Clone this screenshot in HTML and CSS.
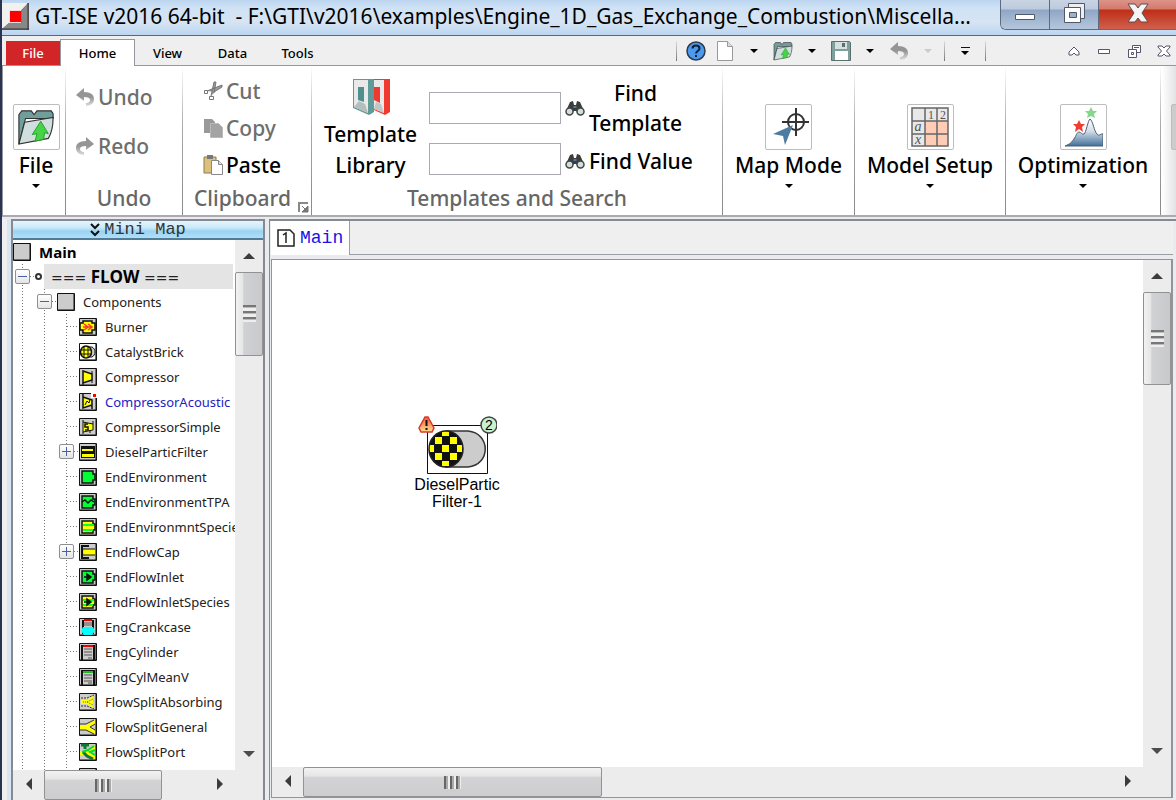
FILE: index.html
```html
<!DOCTYPE html>
<html lang="en">
<head>
    <meta charset="UTF-8">
    <meta name="viewport" content="width=device-width, initial-scale=1.0">
    <title>GT-ISE v2016 64-bit</title>
    <link rel="stylesheet" href="styles.css">
</head>
<body>
    <!-- shared symbols -->
    <svg class="symbols" aria-hidden="true">
        <defs>
            <linearGradient id="gFade" x1="0" y1="0" x2="0" y2="1">
                <stop offset="0.5" stop-color="#959595"/>
                <stop offset="1" stop-color="#dedede"/>
            </linearGradient>
            <linearGradient id="gPeak" x1="0" y1="0" x2="0" y2="1">
                <stop offset="0" stop-color="#ffffff"/>
                <stop offset="0.45" stop-color="#d3dde6"/>
                <stop offset="1" stop-color="#41719c"/>
            </linearGradient>
            <linearGradient id="gWarn" x1="0" y1="0" x2="0" y2="1">
                <stop offset="0" stop-color="#ef5a3c"/>
                <stop offset="1" stop-color="#ffe08a"/>
            </linearGradient>
        </defs>
        <symbol id="undo" viewBox="0 0 20 20">
            <path d="M1 8 9 1v4c7 0 10 3 10 7 0 4-3 7-8 7v-3c3 0 4-2 4-3 0-2-2-3-6-3v4z" fill="url(#gFade)"/>
        </symbol>
        <symbol id="redo" viewBox="0 0 20 20">
            <path d="M19 8 11 1v4C4 5 1 8 1 12c0 4 3 7 8 7v-3c-3 0-4-2-4-3 0-2 2-3 6-3v4z" fill="url(#gFade)"/>
        </symbol>
        <symbol id="folder" viewBox="0 0 40 40">
            <path d="M2 38V7l3-4h10l3 4 3-4h15l2 3v5H9z" fill="#6f9e9b" stroke="#333" stroke-width="1.2"/>
            <path d="M2 38 8 15l30-5c0 10-2 17-5 22z" fill="#cfdfdd" stroke="#333" stroke-width="1.2"/>
            <path d="M25 14l8 13-4-1-1 7-9 2 2-8-5 1z" fill="#45d445" stroke="#2a9a2a"/>
        </symbol>
        <symbol id="binoculars" viewBox="0 0 20 16">
            <path d="M1 11 5 2l3-1 1 4h2l1-4 3 1 4 9-4 3-4-3H9l-4 3z" fill="#3c3c3c"/>
            <circle cx="4.500" cy="11.500" r="3.500" fill="#cfe0dc" stroke="#444" stroke-width="1.500"/>
            <circle cx="15.500" cy="11.500" r="3.500" fill="#cfe0dc" stroke="#444" stroke-width="1.500"/>
            <path d="M8.500 6h3v2h-3z" fill="#4a7aa0"/>
        </symbol>
        <symbol id="tile" viewBox="0 0 18 18">
            <path d="M.5.5h17v17H.5z" fill="#ccc" stroke="#111"/>
            <path d="M1 17h16V1" fill="none" stroke="#111"/>
        </symbol>
        <symbol id="env" viewBox="0 0 18 18">
            <path d="M3 3h11v3h2v6h-2v3H3z" stroke="#111" stroke-width="1.500"/>
        </symbol>
    </svg>

    <div class="window">
        <header class="titlebar">
            <svg class="app-icon" viewBox="0 0 27 27" aria-hidden="true">
                <path d="M0 0h27v27H0z" fill="#777"/>
                <path d="M0 0h26L8 19 0 26z" fill="#f1f1f1"/>
                <path d="M26 0v26H0l7-6h13V8z" fill="#888"/>
                <path d="M7 7h12v13H7z" fill="#f5d8d8"/>
                <path d="M8 8h11v11H8z" fill="#f00"/>
                <path d="M0 26h27M26 0v27" stroke="#333" fill="none"/>
            </svg>
            <h1>GT-ISE v2016 64-bit &nbsp;- F:\GTI\v2016\examples\Engine_1D_Gas_Exchange_Combustion\Miscella...</h1>
            <div class="window-buttons">
                <button aria-label="Minimize">
                    <svg width="22" height="22" viewBox="0 0 22 22"><path d="M1.500 12.500h19v5h-19z" fill="#fff" stroke="#50596b"/></svg>
                </button>
                <button aria-label="Restore">
                    <svg width="24" height="24" viewBox="0 0 24 24"><path d="M6.500 2.500h16v15h-16z" fill="#eee" stroke="#50596b"/><path d="M2.500 6.500h16v15h-16z" fill="#fff" stroke="#50596b"/><path d="M7.500 11.500h7v5h-7z" fill="#9db1c9" stroke="#50596b"/></svg>
                </button>
                <button class="close" aria-label="Close">
                    <svg width="22" height="20" viewBox="0 0 22 20"><path d="M1 1h7l3 4 3-4h7l-6 9 6 9h-7l-3-4-3 4H1l6-9z" fill="#f4f4f4" stroke="#5c4a50"/></svg>
                </button>
            </div>
        </header>

        <nav class="tabs">
            <button class="tab file-tab">File</button>
            <button class="tab active">Home</button>
            <button class="tab">View</button>
            <button class="tab">Data</button>
            <button class="tab">Tools</button>

            <div class="quick-access">
                <span class="sep first"></span>
                <button aria-label="Help">
                    <svg width="20" height="20" viewBox="0 0 20 20"><circle cx="10" cy="10" r="9" fill="#4a9bf0" stroke="#2b3b4c" stroke-width="1.500"/><path d="M6.500 7.500c0-4 7-4 7 0 0 2.500-3.500 2.500-3.500 5M10 14v2" fill="none" stroke="#12202e" stroke-width="2"/></svg>
                </button>
                <button aria-label="New">
                    <svg width="16" height="20" viewBox="0 0 16 20"><path d="M.5.5h10l5 5v14H.5z" fill="#fff" stroke="#999"/><path d="M10.500.5v5h5" fill="#ddd" stroke="#999"/></svg>
                </button>
                <button aria-label="New options"><i class="caret"></i></button>
                <button aria-label="Open"><svg width="20" height="20"><use href="#folder"/></svg></button>
                <button aria-label="Open options"><i class="caret"></i></button>
                <button aria-label="Save">
                    <svg width="20" height="20" viewBox="0 0 20 20"><path d="M.5.5h18l1 1v18H.5z" fill="#7f9f9d" stroke="#5c6f6e"/><path d="M4 1h12v7H4z" fill="#d5e0df"/><path d="M11 2h3v4h-3z" fill="#5c6f6e"/><path d="M4 10h13v9H4z" fill="#fff"/></svg>
                </button>
                <button aria-label="Save options"><i class="caret"></i></button>
                <button aria-label="Undo"><svg width="20" height="20"><use href="#undo"/></svg></button>
                <button aria-label="Undo options"><i class="caret faint"></i></button>
                <span class="sep"></span>
                <button class="customize" aria-label="Customize"><i class="bar"></i><i class="caret"></i></button>
                <span class="sep"></span>
            </div>
            <div class="mdi-buttons">
                <button aria-label="Collapse ribbon">
                    <svg width="14" height="12" viewBox="0 0 14 12"><path d="M2 7 7 2l5 5v3H9L7 8 5 10H2z" fill="#fff" stroke="#55556e"/></svg>
                </button>
                <button aria-label="Minimize document">
                    <svg width="14" height="10" viewBox="0 0 14 10"><path d="M1.500 3.500h11v4h-11z" fill="#fff" stroke="#55556e"/></svg>
                </button>
                <button aria-label="Restore document">
                    <svg width="15" height="15" viewBox="0 0 15 15"><path d="M5.500 1.500h8v7h-8z" fill="#fff" stroke="#55556e"/><path d="M7 3.500h5" stroke="#55556e"/><path d="M1.500 5.500h8v8h-8z" fill="#fff" stroke="#55556e"/><path d="M4.500 8.500h2v2h-2z" fill="none" stroke="#55556e"/></svg>
                </button>
                <button aria-label="Close document">
                    <svg width="14" height="14" viewBox="0 0 14 14"><path d="M1 2h4l2 2 2-2h4v1L9.500 7 13 11v1H9l-2-2-2 2H1v-1l3.500-4L1 3z" fill="#fff" stroke="#55556e"/></svg>
                </button>
            </div>
        </nav>

        <section class="ribbon">
            <div class="group file-group">
                <button class="big">
                    <span class="frame"><svg width="38" height="38"><use href="#folder"/></svg></span>
                    File
                    <i class="caret"></i>
                </button>
            </div>

            <div class="group undo-group">
                <div class="commands spread">
                    <button class="command" disabled><svg width="20" height="20"><use href="#undo"/></svg>Undo</button>
                    <button class="command" disabled><svg width="20" height="20"><use href="#redo"/></svg>Redo</button>
                </div>
                <div class="group-name">Undo</div>
            </div>

            <div class="group clipboard-group">
                <div class="commands">
                    <button class="command" disabled>
                        <svg width="20" height="20" viewBox="0 0 20 20"><path d="M4 10 19 4v2l-8 5M8 15l3-14h2l-2 11" fill="#999" stroke="#777"/><path d="M1.500 9.500h3v3h-3zM6.500 15.500h4v3h-4z" fill="#fff" stroke="#777"/></svg>Cut
                    </button>
                    <button class="command" disabled>
                        <svg width="20" height="20" viewBox="0 0 20 20"><path d="M1 1h8l3 3v11H1z" fill="#999"/><path d="M7.500 5.500h8l4 4v10h-12z" fill="#a3a3a3" stroke="#b9b9b9"/></svg>Copy
                    </button>
                    <button class="command">
                        <svg width="20" height="20" viewBox="0 0 20 20"><path d="M1 2h12v16H1z" fill="#dcc07e" stroke="#8c7a50"/><path d="M4 0h6v4H4z" fill="#777"/><path d="M8.500 5.500h7l4 4v10h-11z" fill="#fff" stroke="#888"/><path d="M15.500 5.500v4h4" fill="#ddd" stroke="#888"/></svg>Paste
                    </button>
                </div>
                <div class="group-name">Clipboard</div>
                <button class="launcher" aria-label="Clipboard options">
                    <svg width="11" height="11" viewBox="0 0 11 11"><path d="M1 10V1h9" fill="none" stroke="#888" stroke-width="2"/><path d="M4 4l3 3M10 4v6H4z" fill="#777" stroke="#777"/></svg>
                </button>
            </div>

            <div class="group template-group">
                <div class="search-row">
                    <button class="library">
                        <svg width="38" height="36" viewBox="0 0 38 36" aria-hidden="true">
                            <path d="M1 0h12l9 0v33l-5 3-16-7z" fill="#5e9b99"/>
                            <path d="M2 1h14v33L2 28z" fill="#e9e9e9"/><path d="M2 28l5-6 6 3 3 9z" fill="#b5bdbd"/><path d="M6 8h6v15l-6-2z" fill="#4f8f8d"/>
                            <path d="M22 0h16v33l-5 3-11-5z" fill="#f03a30"/>
                            <path d="M22 1h10v33l-10-4z" fill="#e9e9e9"/><path d="M22 30l2-7 5 2 3 9z" fill="#c4c4c4"/><path d="M22 8h6v16l-6-3z" fill="#f03a30"/>
                        </svg>
                        <span>Template<br>Library</span>
                    </button>
                    <div class="fields">
                        <input type="text" id="findTemplate">
                        <input type="text" id="findValue">
                    </div>
                    <div class="find-labels">
                        <label for="findTemplate"><svg width="20" height="16"><use href="#binoculars"/></svg><span>Find<br>Template</span></label>
                        <label for="findValue"><svg width="20" height="16"><use href="#binoculars"/></svg>Find Value</label>
                    </div>
                </div>
                <div class="group-name">Templates and Search</div>
            </div>

            <div class="group map-group">
                <button class="big">
                    <span class="frame">
                        <svg width="40" height="40" viewBox="0 0 40 40"><circle cx="27" cy="15" r="8" fill="none" stroke="#333" stroke-width="2"/><path d="M27 1v28M13 15h27" stroke="#333" stroke-width="2"/><path d="M24 18 4 27l10 2 2 9z" fill="#4d7ba3"/></svg>
                    </span>
                    Map Mode
                    <i class="caret"></i>
                </button>
            </div>

            <div class="group setup-group">
                <button class="big">
                    <span class="frame">
                        <svg width="38" height="40" viewBox="0 0 38 40">
                            <path d="M1 1h36v38H1z" fill="#e8e8e8"/><path d="M14 14h23v25H14z" fill="#ffccb5"/>
                            <path d="M1 1h36v38H1zM14 1v38M26 1v38M1 14h36M1 27h36" fill="none" stroke="#666" stroke-width="1.500"/>
                            <text x="20" y="12" class="cell">1</text><text x="32" y="12" class="cell">2</text>
                            <text x="7" y="24" class="cell italic">a</text><text x="7" y="37" class="cell italic">x</text>
                        </svg>
                    </span>
                    Model Setup
                    <i class="caret"></i>
                </button>
            </div>

            <div class="group optimization-group">
                <button class="big">
                    <span class="frame">
                        <svg width="40" height="40" viewBox="0 0 40 40">
                            <path d="M2 39c5-2 7-4 9-7 2-3 3-7 5-7s3 3 5 2 4-14 6-15c3 2 4 12 7 15 2 3 4-1 6 0v12z" fill="url(#gPeak)" stroke="#4b5f70"/>
                            <path d="M28 0l2 4h4l-3 3 1 4-4-2-4 2 1-4-3-3h4z" fill="#86d68b"/>
                            <path d="M16 13l2 4h4l-3 3 1 5-4-3-4 3 1-5-3-3h4z" fill="#f23c32"/>
                        </svg>
                    </span>
                    Optimization
                    <i class="caret"></i>
                </button>
            </div>

            <div class="group next-group"><span class="frame filled"></span></div>
        </section>

        <main class="workspace">
            <div class="edge"></div>
            <aside class="sidebar">
                <button class="mini-map">
                    <svg width="10" height="14" viewBox="0 0 10 14" aria-hidden="true"><path d="M1 1l4 4 4-4M1 8l4 4 4-4" fill="none" stroke="#111" stroke-width="2"/></svg>Mini Map
                </button>
                <div class="tree-area">
                    <div class="tree">
                        <div class="row root"><svg class="icon"><use href="#tile"/></svg><strong>Main</strong></div>
                        <ul>
                            <li>
                                <div class="row">
                                    <button class="toggle" aria-label="Collapse FLOW"></button><i class="link"></i><i class="dot"></i>
                                    <span class="selected">=== <strong>FLOW</strong> ===</span>
                                </div>
                                <ul>
                                    <li>
                                        <div class="row"><button class="toggle" aria-label="Collapse Components"></button><i class="link"></i><svg class="icon"><use href="#tile"/></svg>Components</div>
                                        <ul>
                                            <li class="row"><i class="leaf"></i><svg class="icon" viewBox="0 0 18 18"><use href="#tile"/><path d="M1 5h3V3h9v2h3v7h-3v3H4v-3H1z" fill="#ff0" stroke="#111" stroke-width="1.500"/><path d="M5 6l4 3-4 3M9 6l4 3-4 3M4 9h8" fill="none" stroke="#f33" stroke-width="1.500"/></svg>Burner</li>
                                            <li class="row"><i class="leaf"></i><svg class="icon" viewBox="0 0 18 18"><use href="#tile"/><path d="M1 1h15v15H1z" fill="#fff"/><path d="M9 4h4c4 2 4 8 0 10H9z" fill="#ccc" stroke="#111"/><ellipse cx="7" cy="9" rx="5.500" ry="6" fill="#ff0" stroke="#111" stroke-width="1.500"/><path d="M5 3v12M9 3v12M1 7h12M1 11h12" stroke="#111"/></svg>CatalystBrick</li>
                                            <li class="row"><i class="leaf"></i><svg class="icon" viewBox="0 0 18 18"><use href="#tile"/><path d="M4 3l9 3v6l-9 3z" fill="#ff0" stroke="#111" stroke-width="1.500"/><path d="M13 3v3M4 15v2M13 12v3" stroke="#111"/></svg>Compressor</li>
                                            <li class="row linked"><i class="leaf"></i><svg class="icon" viewBox="0 0 18 18"><use href="#tile"/><path d="M4 4l9 3v5l-9 3zM4 4V1M13 12v4" fill="#ff0" stroke="#111" stroke-width="1.500"/><path d="M6 12l2-4 2 2 1-4" fill="none" stroke="#111"/><path d="M12 0h6v5h-6z" fill="#fff"/><path d="M14 1h3v3h-3z" fill="red"/></svg>CompressorAcoustic</li>
                                            <li class="row"><i class="leaf"></i><svg class="icon" viewBox="0 0 18 18"><use href="#tile"/><path d="M4 4l10 2v6L4 14zM4 4V2M14 3v3M4 14v2M11 12v3" fill="#ff0" stroke="#111"/><path d="M9 6H6v3h3v3H6" fill="none" stroke="#111" stroke-width="1.500"/></svg>CompressorSimple</li>
                                            <li class="row"><button class="toggle plus" aria-label="Expand DieselParticFilter"></button><i class="link"></i><svg class="icon" viewBox="0 0 18 18"><use href="#tile"/><path d="M2 3h14v12H2z" fill="#111"/><path d="M3 6h11v2H3zM3 11h12v3H3z" fill="#ff0"/></svg>DieselParticFilter</li>
                                            <li class="row"><i class="leaf"></i><svg class="icon" viewBox="0 0 18 18"><use href="#tile"/><use href="#env" fill="#0f3"/></svg>EndEnvironment</li>
                                            <li class="row"><i class="leaf"></i><svg class="icon" viewBox="0 0 18 18"><use href="#tile"/><use href="#env" fill="#0f3"/><path d="M3 9l3-2 3 3 3-3 3 2" fill="none" stroke="#111" stroke-width="1.500"/></svg>EndEnvironmentTPA</li>
                                            <li class="row"><i class="leaf"></i><svg class="icon" viewBox="0 0 18 18"><use href="#tile"/><use href="#env" fill="#ff0"/><path d="M4 7h11M4 12h10" stroke="#0f3" stroke-width="2"/></svg>EndEnvironmntSpecies</li>
                                            <li class="row"><button class="toggle plus" aria-label="Expand EndFlowCap"></button><i class="link"></i><svg class="icon" viewBox="0 0 18 18"><use href="#tile"/><path d="M10 3H3v12h7" fill="none" stroke="#111" stroke-width="2"/><path d="M5 6h11v6H5z" fill="#ff0"/><path d="M4 6h12M4 12h12" stroke="#111"/></svg>EndFlowCap</li>
                                            <li class="row"><i class="leaf"></i><svg class="icon" viewBox="0 0 18 18"><use href="#tile"/><use href="#env" fill="#0f3"/><path d="M5 9h6M8 6l4 3-4 3z" fill="#111" stroke="#111" stroke-width="1.500"/></svg>EndFlowInlet</li>
                                            <li class="row"><i class="leaf"></i><svg class="icon" viewBox="0 0 18 18"><use href="#tile"/><use href="#env" fill="#ff0"/><path d="M4 7h11M4 12h10" stroke="#0f3" stroke-width="2"/><path d="M5 9h6M8 6l4 3-4 3z" fill="#111" stroke="#111" stroke-width="1.500"/></svg>EndFlowInletSpecies</li>
                                            <li class="row"><i class="leaf"></i><svg class="icon" viewBox="0 0 18 18"><use href="#tile"/><path d="M4 2v14M14 2v14" stroke="#111" stroke-width="2"/><path d="M5 2h8" stroke="#e00" stroke-width="2"/><path d="M5 5h8M5 7h8" stroke="#555"/><path d="M4 9h10l2 4-3 4H5l-3-4z" fill="#0ff"/></svg>EngCrankcase</li>
                                            <li class="row"><i class="leaf"></i><svg class="icon" viewBox="0 0 18 18"><use href="#tile"/><path d="M3 17V3h12v14" fill="none" stroke="#111" stroke-width="2"/><path d="M4 3h10" stroke="#e00" stroke-width="2"/><path d="M5 6h8M5 9h8M5 12h8M9 15h4" stroke="#555"/></svg>EngCylinder</li>
                                            <li class="row"><i class="leaf"></i><svg class="icon" viewBox="0 0 18 18"><use href="#tile"/><path d="M3 17V3h12v14" fill="none" stroke="#111" stroke-width="2"/><path d="M4 4h10" stroke="#2b2" stroke-width="2"/><path d="M5 7h8M5 10h8M5 13h8M9 15h4" stroke="#555"/></svg>EngCylMeanV</li>
                                            <li class="row"><i class="leaf"></i><svg class="icon" viewBox="0 0 18 18"><use href="#tile"/><path d="M2 7h6l6-4v12l-6-4H2z" fill="#ff0"/><path d="M2 5h6l7-3M2 13h6l7 3" fill="none" stroke="#333" stroke-dasharray="2 1"/><path d="M4 9h4M8 9l6-3M8 9l6 3" fill="none" stroke="#55a" stroke-dasharray="1 1"/></svg>FlowSplitAbsorbing</li>
                                            <li class="row"><i class="leaf"></i><svg class="icon" viewBox="0 0 18 18"><use href="#tile"/><path d="M1 7h6l9-5v4l-5 3 5 3v4l-9-4H1z" fill="#ff0"/><path d="M1 6h6l8-4M1 12h6l8 4M16 6l-5 3 5 3" fill="none" stroke="#333"/></svg>FlowSplitGeneral</li>
                                            <li class="row"><i class="leaf"></i><svg class="icon" viewBox="0 0 18 18"><use href="#tile"/><path d="M1 8h6l9-5v4l-5 2 5 3v4l-9-4H1z" fill="#ff0"/><path d="M2 2h8M6 2v4M4 9l4 4 6 3" fill="none" stroke="#173" stroke-width="3"/><path d="M3 9l6-2 6-4M16 7l-5 2 5 3" fill="none" stroke="#0d3" stroke-width="2"/></svg>FlowSplitPort</li>
                                            <li class="row"><i class="leaf"></i><svg class="icon"><use href="#tile"/></svg>FlowSplitSphere</li>
                                        </ul>
                                    </li>
                                </ul>
                            </li>
                        </ul>
                    </div>
                    <div class="scroll vertical">
                        <button class="arrow up" aria-label="Scroll up"></button>
                        <div class="track"><div class="thumb tree-v"></div></div>
                        <button class="arrow down" aria-label="Scroll down"></button>
                    </div>
                </div>
                <div class="scroll horizontal tree-scroll">
                    <button class="arrow left" aria-label="Scroll left"></button>
                    <div class="track"><div class="thumb tree-h"></div></div>
                    <button class="arrow right" aria-label="Scroll right"></button>
                </div>
            </aside>

            <section class="editor">
                <div class="doc-tabs">
                    <button class="doc-tab">
                        <svg width="18" height="18" viewBox="0 0 18 18" aria-hidden="true"><path d="M1 1h12l4 4v12H1z" fill="#fff" stroke="#222" stroke-width="1.500"/><path d="M6 6l3-2v10" fill="none" stroke="#222" stroke-width="1.500"/></svg>Main
                    </button>
                    <div class="doc-tabs-rest"></div>
                </div>
                <div class="map">
                    <div class="canvas">
                        <div class="node">
                            <svg width="80" height="60" viewBox="0 0 80 60" aria-hidden="true">
                                <defs>
                                    <clipPath id="disc"><ellipse cx="29" cy="33" rx="17" ry="18"/></clipPath>
                                </defs>
                                <path d="M10.500 9.500h60v48h-60z" fill="#fff" stroke="#111"/>
                                <path d="M29 15h22c23 2 23 34 0 36H29z" fill="#ccc" stroke="#333" stroke-width="1.500"/>
                                <g clip-path="url(#disc)">
                                    <path d="M12 15h34v36H12z" fill="#111"/>
                                    <path d="M25 15h7v5h-7zM18 21h7v7h-7zM33 21h7v7h-7zM12 29h5v7h-5zM25 29h7v7h-7zM40 29h5v7h-5zM18 37h7v7h-7zM33 37h7v7h-7zM25 45h7v5h-7z" fill="#ff0"/>
                                </g>
                                <ellipse cx="29" cy="33" rx="17" ry="18" fill="none" stroke="#222" stroke-width="1.500"/>
                                <path d="M8 1h3l6 11-2 4H4l-2-4z" fill="url(#gWarn)" stroke="#d8392b" stroke-width="1.500"/>
                                <path d="M9.500 4v6M9.500 12v2" stroke="#111" stroke-width="2"/>
                                <circle cx="72" cy="9" r="8" fill="#c9f2cf" stroke="#444" stroke-width="1.500"/>
                                <text x="72" y="14" class="badge">2</text>
                            </svg>
                            <span>DieselPartic<br>Filter-1</span>
                        </div>
                    </div>
                    <div class="scroll vertical">
                        <button class="arrow up" aria-label="Scroll up"></button>
                        <div class="track"><div class="thumb map-v"></div></div>
                        <button class="arrow down" aria-label="Scroll down"></button>
                    </div>
                    <div class="scroll horizontal">
                        <button class="arrow left" aria-label="Scroll left"></button>
                        <div class="track"><div class="thumb map-h"></div></div>
                        <button class="arrow right" aria-label="Scroll right"></button>
                    </div>
                </div>
            </section>
        </main>
    </div>
</body>
</html>
```
FILE: styles.css
```css
* {
    margin: 0;
    padding: 0;
    box-sizing: border-box;
}

body {
    font-family: "Noto Sans", "Open Sans", sans-serif;
    color: #000;
    background: #efefef;
}

button {
    font: inherit;
    color: inherit;
    background: none;
    border: none;
}

svg {
    flex-shrink: 0;
}

.symbols {
    display: block;
    width: 0;
    height: 0;
}

.window {
    display: flex;
    flex-direction: column;
    height: 100vh;
    overflow: hidden;
    border-left: 2px solid #2b3350;
}

/* title bar */
.titlebar {
    display: flex;
    align-items: flex-start;
    height: 36px;
    background: linear-gradient(#bcd6f0 0, #cfe2f5 8px, #d6e4f3 22px, #bdd7f1 34px);
    border-bottom: 1px solid #4f6a86;
    flex-shrink: 0;
}

.app-icon {
    width: 27px;
    height: 27px;
    margin-top: 3px;
}

.titlebar h1 {
    flex: 1;
    min-width: 0;
    padding-left: 6px;
    font-size: 21px;
    font-weight: 400;
    line-height: 33px;
    white-space: nowrap;
    overflow: hidden;
}

.window-buttons {
    display: flex;
    height: 30px;
    border: 1px solid #5c6b80;
    border-top: none;
    border-right: none;
    border-radius: 0 0 0 6px;
    overflow: hidden;
}

.window-buttons button {
    display: flex;
    align-items: center;
    justify-content: center;
    width: 49px;
    padding-bottom: 4px;
    background: linear-gradient(#c9d4e2 0, #bccbdd 9px, #8fa6c3 10px, #b5c7dd 100%);
    border-right: 1px solid #5c6b80;
}

.window-buttons .close {
    width: 77px;
    background: linear-gradient(#dd9388 0, #d4796b 9px, #bf2e17 10px, #d0604c 100%);
    border-right: none;
}

/* ribbon tabs */
.tabs {
    display: flex;
    align-items: flex-end;
    height: 30px;
    padding-left: 4px;
    background: #efefef;
    border-bottom: 1px solid #96989f;
    font-size: 13px;
    font-weight: 500;
    flex-shrink: 0;
}

.tab {
    width: 65px;
    height: 24px;
    line-height: 24px;
}

.file-tab {
    width: 54px;
    color: #fff;
    background: #d22528;
}

.tab.active {
    width: 75px;
    height: 27px;
    margin-bottom: -1px;
    background: #fff;
    border: 1px solid #96989f;
    border-bottom: none;
}

.quick-access,
.mdi-buttons {
    display: flex;
    align-items: center;
    height: 28px;
}

.quick-access {
    margin-left: auto;
}

.quick-access button {
    display: flex;
    flex-direction: column;
    align-items: center;
    justify-content: center;
    width: 29px;
}

.quick-access .sep {
    width: 1px;
    height: 20px;
    margin: 0 2px;
    background: linear-gradient(#ddd, #777);
}

.quick-access .first {
    margin-right: 4px;
}

.quick-access .customize {
    width: 36px;
}

.bar {
    width: 9px;
    height: 1px;
    margin-bottom: 3px;
    background: #111;
}

.mdi-buttons {
    gap: 6px;
    margin-left: 74px;
}

.mdi-buttons button {
    display: flex;
    justify-content: center;
    width: 24px;
}

.caret {
    width: 8px;
    border: 4px solid transparent;
    border-top-color: #000;
    border-bottom: none;
}

.caret.faint {
    border-top-color: #c5d0c5;
}

/* ribbon body */
.ribbon {
    display: flex;
    height: 151px;
    background: linear-gradient(90deg, transparent calc(100% - 14px), #e2e2e4), #fff;
    border-bottom: 2px solid #a9abb1;
    border-left: 1px solid #96989f;
    font-size: 21px;
    font-weight: 500;
    line-height: 30px;
    flex-shrink: 0;
    overflow: hidden;
}

.group {
    position: relative;
    display: flex;
    flex-direction: column;
    padding-bottom: 2px;
    border-right: 1px solid;
    border-image: linear-gradient(#fff, #aaa 40%, #888) 1;
    flex-shrink: 0;
}

.file-group { width: 63px; padding-left: 4px; }
.undo-group { width: 117px; }
.clipboard-group { width: 129px; }
.template-group { width: 411px; }
.map-group { width: 132px; }
.setup-group { width: 151px; }
.optimization-group { width: 155px; }

.next-group {
    width: 60px;
    padding: 38px 0 0 10px;
}

.big {
    display: flex;
    flex-direction: column;
    align-items: center;
    padding-top: 38px;
    white-space: nowrap;
}

.big .caret {
    margin-top: 4px;
}

.frame {
    display: flex;
    align-items: center;
    justify-content: center;
    width: 47px;
    height: 46px;
    border: 1px solid #bdbdbd;
    border-radius: 2px;
}

.frame.filled {
    background: #ccc;
}

.cell {
    font: 12px "Liberation Serif", serif;
    fill: #555;
    text-anchor: middle;
}

.cell.italic {
    font-style: italic;
    font-size: 14px;
}

.commands {
    flex: 1;
    display: flex;
    flex-direction: column;
    align-items: flex-start;
    gap: 7px;
    padding: 10px 0 0 20px;
}

.commands.spread {
    gap: 19px;
    padding: 16px 0 0 9px;
}

.command {
    display: flex;
    align-items: center;
    gap: 3px;
    color: #000;
}

.command:disabled {
    color: #6e6e6e;
}

.group-name {
    color: #666;
    text-align: center;
}

.clipboard-group .group-name {
    text-align: left;
    padding-left: 11px;
}

.launcher {
    position: absolute;
    right: 2px;
    bottom: 2px;
    line-height: 0;
}

.search-row {
    flex: 1;
    display: flex;
}

.library {
    display: flex;
    flex-direction: column;
    align-items: center;
    width: 117px;
    padding-top: 13px;
    line-height: 31px;
}

.library svg {
    margin-bottom: 4px;
}

.fields {
    display: flex;
    flex-direction: column;
    gap: 19px;
    padding-top: 26px;
}

.fields input {
    width: 132px;
    height: 32px;
    border: 1px solid #a9abb3;
    background: #fff;
}

.find-labels {
    display: flex;
    flex-direction: column;
    gap: 8px;
    padding: 12px 0 0 4px;
}

.find-labels label {
    display: flex;
    align-items: center;
    gap: 4px;
    text-align: center;
    white-space: nowrap;
}

/* workspace */
.workspace {
    flex: 1;
    display: flex;
    min-height: 0;
    padding-top: 2px;
    background: #e9ebee;
}

.edge {
    width: 9px;
    border-right: 4px solid #d9e6f2;
    background: #f0f0f0;
}

.sidebar {
    display: flex;
    flex-direction: column;
    width: 254px;
    background: #fff;
    border: 2px solid #858a92;
    border-bottom: none;
    flex-shrink: 0;
}

.mini-map {
    display: flex;
    align-items: center;
    justify-content: center;
    gap: 4px;
    height: 19px;
    background: linear-gradient(#e6f5fd 0, #c9e9fa 40%, #9ad3f2 60%, #b2dff6 100%);
    border-bottom: 2px solid #4e7b98;
    font: 17px/17px "Liberation Mono", monospace;
    color: #333;
    flex-shrink: 0;
}

.tree-area {
    flex: 1;
    display: flex;
    min-height: 0;
}

.tree {
    flex: 1;
    min-width: 0;
    overflow: hidden;
    font-size: 13px;
}

.tree ul {
    list-style: none;
    background: repeating-linear-gradient(#777 0 1px, transparent 1px 3px) 9px 0 / 1px 100% no-repeat;
}

.tree ul ul {
    margin-left: 22px;
}

.row {
    display: flex;
    align-items: center;
    height: 25px;
    padding-left: 2px;
    color: #222;
    white-space: nowrap;
}

.row.root {
    gap: 8px;
    height: 24px;
    padding-left: 0;
}

.row strong {
    font-family: "Open Sans", sans-serif;
    font-size: 15px;
    color: #000;
}

.row.linked {
    color: #2222c4;
}

.icon {
    width: 18px;
    height: 18px;
}

li > .icon,
li .row .icon {
    margin-right: 8px;
}

.toggle {
    width: 15px;
    height: 15px;
    border: 1px solid #8f8f8f;
    border-radius: 2px;
    background: linear-gradient(#4860a8, #4860a8) center / 9px 1px no-repeat, linear-gradient(#fff, #e4e4e4);
    flex-shrink: 0;
}

.toggle.plus {
    background: linear-gradient(#4860a8, #4860a8) center / 9px 1px no-repeat, linear-gradient(#4860a8, #4860a8) center / 1px 9px no-repeat, linear-gradient(#fff, #e4e4e4);
}

.link,
.leaf {
    width: 5px;
    height: 1px;
    background: repeating-linear-gradient(90deg, #777 0 1px, transparent 1px 3px);
    flex-shrink: 0;
}

.leaf {
    width: 12px;
    margin-left: 8px;
}

.dot {
    width: 7px;
    height: 7px;
    border: 2px solid #333;
    border-radius: 50%;
    margin-right: 2px;
}

.selected {
    flex: 1;
    height: 25px;
    margin-right: 2px;
    padding-left: 7px;
    font: 14px/25px "DejaVu Sans", sans-serif;
    background: #e4e4e4;
}

.selected strong {
    font-size: 17px;
}

/* scroll bars */
.scroll {
    display: flex;
    background: #ececec;
}

.scroll .track {
    flex: 1;
}

.scroll.vertical {
    flex-direction: column;
    width: 28px;
    flex-shrink: 0;
}

.scroll.horizontal {
    height: 30px;
}

.tree-scroll {
    padding-right: 28px;
}

.arrow {
    display: flex;
    align-items: center;
    justify-content: center;
    width: 31px;
    height: 32px;
    flex-shrink: 0;
}

.scroll.vertical .arrow {
    width: 28px;
}

.scroll.horizontal .arrow {
    height: 28px;
}

.arrow::before {
    content: "";
    border: 6px solid transparent;
}

.arrow.up::before { border-bottom-color: #3c3c3c; border-top: none; }
.arrow.down::before { border-top-color: #4c4c4c; border-bottom: none; }
.arrow.left::before { border-right-color: #3c3c3c; border-left: none; }
.arrow.right::before { border-left-color: #3c3c3c; border-right: none; }

.thumb {
    display: flex;
    align-items: center;
    justify-content: center;
    height: 100%;
    border: 1px solid #929292;
    border-radius: 2px;
    background: linear-gradient(#f2f2f2 0, #e6e6e6 30%, #d3d3d5 31%, #cdcdcf 100%);
}

.vertical .thumb {
    background: linear-gradient(90deg, #f2f2f2 0, #e6e6e6 25%, #d0d1d4 30%, #c9c9cc 100%);
}

.thumb::before {
    content: "";
    width: 17px;
    height: 13px;
    background: repeating-linear-gradient(90deg, #666 0 2px, #aaa 2px 4px, #eee 4px 6px);
}

.vertical .thumb::before {
    width: 13px;
    height: 17px;
    background: repeating-linear-gradient(#777 0 2px, #bbb 2px 3px, #eee 3px 6px);
}

.tree-v { height: 18%; }
.tree-h { width: 74%; }
.map-v { height: 21%; }
.map-h { width: 37%; }

/* editor */
.editor {
    flex: 1;
    display: flex;
    flex-direction: column;
    min-width: 0;
    margin-left: 4px;
    padding: 0 3px 2px 1px;
    border-top: 2px solid #858a92;
    border-left: 1px solid #858a92;
}

.doc-tabs {
    display: flex;
    height: 34px;
    flex-shrink: 0;
}

.doc-tab {
    display: flex;
    align-items: center;
    gap: 5px;
    padding: 0 6px;
    background: #fff;
    border-right: 1px solid #9a9ea6;
    font: 18px "Liberation Mono", monospace;
    color: #1414e6;
}

.doc-tabs-rest {
    flex: 1;
    background: #efefef;
    border-bottom: 1px solid #9a9ea6;
}

.map {
    flex: 1;
    display: grid;
    grid-template-columns: 1fr 28px;
    grid-template-rows: 1fr 30px;
    min-height: 0;
    margin-top: 4px;
    background: #ececec;
    border: 1px solid #8e959e;
    border-right-width: 2px;
}

.canvas {
    position: relative;
    background: #fff;
    overflow: hidden;
}

.node {
    position: absolute;
    left: 144px;
    top: 156px;
    width: 82px;
    display: flex;
    flex-direction: column;
    align-items: center;
    font: 16px/17px "Liberation Sans", Arial, sans-serif;
    text-align: center;
}

.badge {
    font: 14px "Liberation Sans", Arial, sans-serif;
    text-anchor: middle;
}
```
